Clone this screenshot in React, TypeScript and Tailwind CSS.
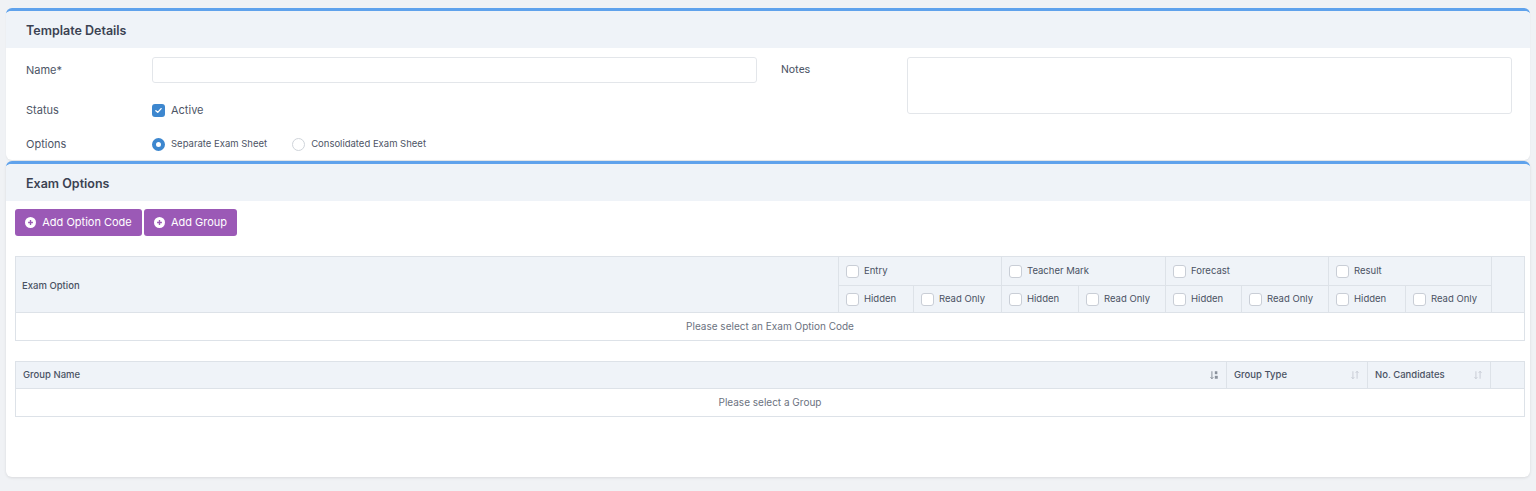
import React from "react";

const font = { fontFamily: "Inter, 'Noto Sans', sans-serif" };

function Box({ checked = false }: { checked?: boolean }) {
  if (checked) {
    return (
      <span className="inline-flex h-[13px] w-[13px] shrink-0 items-center justify-center rounded-[3px] bg-[#3d87cf]">
        <svg viewBox="0 0 12 12" className="h-[9px] w-[9px]">
          <path d="M2.5 6.2 L5 8.5 L9.5 3.5" fill="none" stroke="white" strokeWidth="1.8" strokeLinecap="round" strokeLinejoin="round" />
        </svg>
      </span>
    );
  }
  return <span className="inline-block h-[13px] w-[13px] shrink-0 rounded-[3px] border border-[#c9ced6] bg-white" />;
}

function Radio({ checked = false }: { checked?: boolean }) {
  return checked ? (
    <span className="inline-block h-[13px] w-[13px] shrink-0 rounded-full border-[4px] border-[#3d87cf] bg-white" />
  ) : (
    <span className="inline-block h-[13px] w-[13px] shrink-0 rounded-full border border-[#cfd4da] bg-white" />
  );
}

function PlusCircle() {
  return (
    <svg viewBox="0 0 16 16" className="h-[11px] w-[11px] shrink-0">
      <circle cx="8" cy="8" r="8" fill="white" />
      <path d="M8 4.5 V11.5 M4.5 8 H11.5" stroke="#9b59b6" strokeWidth="2" />
    </svg>
  );
}

function SortBoth() {
  return (
    <svg viewBox="0 0 12 12" className="h-[10px] w-[10px] shrink-0">
      <path d="M3.5 1.5 V10.5 M1.8 8.6 L3.5 10.5 L5.2 8.6" fill="none" stroke="#c6cbd3" strokeWidth="1.1" />
      <path d="M8.5 10.5 V1.5 M6.8 3.4 L8.5 1.5 L10.2 3.4" fill="none" stroke="#c6cbd3" strokeWidth="1.1" />
    </svg>
  );
}

function SortAlpha() {
  return (
    <svg viewBox="0 0 12 12" className="h-[10px] w-[10px] shrink-0">
      <path d="M3.5 1.5 V10.5 M1.8 8.6 L3.5 10.5 L5.2 8.6" fill="none" stroke="#8a919c" strokeWidth="1.2" />
      <rect x="7" y="1.5" width="3" height="3.5" fill="#8a919c" />
      <rect x="7" y="7" width="3.5" height="3.5" fill="#8a919c" />
    </svg>
  );
}

function CheckCell({ label, colSpan }: { label: string; colSpan?: number }) {
  return (
    <th colSpan={colSpan} className="border border-[#dde2e8] px-[7px] text-left align-middle font-normal">
      <div className="flex items-center gap-[5px]">
        <Box />
        <span>{label}</span>
      </div>
    </th>
  );
}

function SortHead({ label, alpha = false }: { label: string; alpha?: boolean }) {
  return (
    <th className="border border-[#dde2e8] px-[7px] text-left align-middle font-medium">
      <div className="flex items-center justify-between">
        <span>{label}</span>
        {alpha ? <SortAlpha /> : <SortBoth />}
      </div>
    </th>
  );
}

export default function App() {
  return (
    <div style={font} className="min-h-[491px] w-[1536px] bg-[#f0f2f5] px-[6px] pt-[8px]">
      {/* Template Details */}
      <div className="w-[1524px] overflow-hidden rounded-[6px] border-t-[3px] border-[#5fa2ec] bg-white shadow-[0_1px_2px_rgba(0,0,0,0.06)]">
        <div className="flex h-[37px] items-center bg-[#eff3f8] px-[20px] pt-[3px] text-[12.5px] font-semibold text-[#3b4252]">
          Template Details
        </div>
        <div className="flex pb-[3px] pl-[20px] pr-[18px] pt-[9px] text-[11px] text-[#4d5566]">
          <div className="flex w-[731px] flex-col">
            <div className="flex h-[26px] items-center">
              <div className="w-[126px]">Name*</div>
              <input className="h-[26px] w-[605px] rounded-[3px] border border-[#e3e6ea] bg-white outline-none" />
            </div>
            <div className="mt-[14px] flex h-[26px] items-center">
              <div className="w-[126px]">Status</div>
              <label className="flex items-center gap-[6px]">
                <Box checked />
                <span>Active</span>
              </label>
            </div>
            <div className="mt-[8px] flex h-[26px] items-center">
              <div className="w-[126px]">Options</div>
              <div className="flex items-center text-[9.5px]">
                <Radio checked />
                <span className="ml-[6px]">Separate Exam Sheet</span>
                <span className="ml-[25px] flex"><Radio /></span>
                <span className="ml-[6px]">Consolidated Exam Sheet</span>
              </div>
            </div>
          </div>
          <div className="ml-[24px] flex flex-1 items-start">
            <div className="flex h-[26px] w-[126px] items-center" style={{ fontFamily: "Roboto, 'Liberation Sans', sans-serif" }}>Notes</div>
            <textarea className="h-[57px] flex-1 resize-none rounded-[3px] border border-[#e3e6ea] bg-white outline-none" />
          </div>
        </div>
      </div>

      {/* Exam Options */}
      <div className="mt-[1px] w-[1524px] overflow-hidden rounded-[6px] border-t-[3px] border-[#5fa2ec] bg-white shadow-[0_1px_3px_rgba(0,0,0,0.10)]">
        <div className="flex h-[37px] items-center bg-[#eff3f8] px-[20px] pt-[3px] text-[12.5px] font-semibold text-[#3b4252]">
          Exam Options
        </div>
        <div className="px-[9px] pb-[60px] pt-[8px]">
          <div className="flex gap-[2px]">
            <button className="flex h-[27px] w-[127px] items-center justify-center gap-[6px] rounded-[3px] bg-[#9b59b6] text-[11px] text-white">
              <PlusCircle />
              Add Option Code
            </button>
            <button className="flex h-[27px] w-[93px] items-center justify-center gap-[6px] rounded-[3px] bg-[#9b59b6] text-[11px] text-white">
              <PlusCircle />
              Add Group
            </button>
          </div>

          <table className="mt-[20px] w-[1509px] table-fixed border-collapse text-[9.5px] text-[#4a5263]">
            <colgroup>
              <col style={{ width: 823 }} />
              <col style={{ width: 75 }} />
              <col style={{ width: 88 }} />
              <col style={{ width: 77 }} />
              <col style={{ width: 87 }} />
              <col style={{ width: 76 }} />
              <col style={{ width: 87 }} />
              <col style={{ width: 77 }} />
              <col style={{ width: 86 }} />
              <col style={{ width: 33 }} />
            </colgroup>
            <thead className="bg-[#eff3f8]">
              <tr className="h-[29px]">
                <th rowSpan={2} className="border border-[#dde2e8] px-[6px] pt-[3px] text-left font-medium">Exam Option</th>
                <CheckCell label="Entry" colSpan={2} />
                <CheckCell label="Teacher Mark" colSpan={2} />
                <CheckCell label="Forecast" colSpan={2} />
                <CheckCell label="Result" colSpan={2} />
                <th rowSpan={2} className="border border-[#dde2e8]" />
              </tr>
              <tr className="h-[27px]">
                <CheckCell label="Hidden" />
                <CheckCell label="Read Only" />
                <CheckCell label="Hidden" />
                <CheckCell label="Read Only" />
                <CheckCell label="Hidden" />
                <CheckCell label="Read Only" />
                <CheckCell label="Hidden" />
                <CheckCell label="Read Only" />
              </tr>
            </thead>
            <tbody>
              <tr className="h-[28px]">
                <td colSpan={10} className="border border-[#dde2e8] text-center text-[10px] text-[#6b7280]">
                  Please select an Exam Option Code
                </td>
              </tr>
            </tbody>
          </table>

          <table className="mt-[20px] w-[1509px] table-fixed border-collapse text-[9.5px] text-[#4a5263]">
            <colgroup>
              <col style={{ width: 1211 }} />
              <col style={{ width: 141 }} />
              <col style={{ width: 123 }} />
              <col style={{ width: 34 }} />
            </colgroup>
            <thead className="bg-[#eff3f8]">
              <tr className="h-[27px]">
                <SortHead label="Group Name" alpha />
                <SortHead label="Group Type" />
                <SortHead label="No. Candidates" />
                <th className="border border-[#dde2e8]" />
              </tr>
            </thead>
            <tbody>
              <tr className="h-[28px]">
                <td colSpan={4} className="border border-[#dde2e8] text-center text-[10px] text-[#6b7280]">
                  Please select a Group
                </td>
              </tr>
            </tbody>
          </table>
        </div>
      </div>
    </div>
  );
}
